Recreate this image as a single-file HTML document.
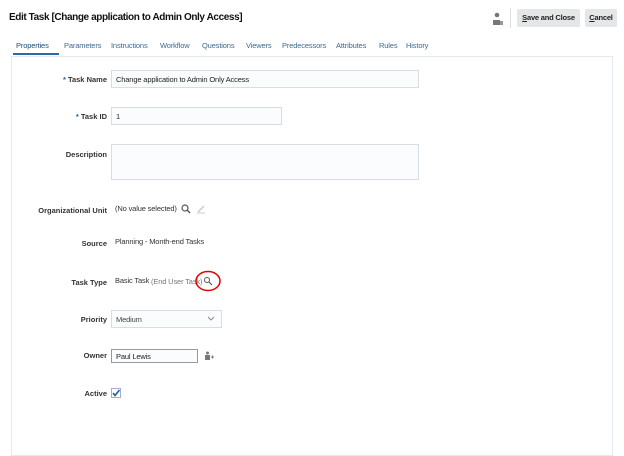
<!DOCTYPE html>
<html><head><style>
body{margin:0;width:624px;height:439px;background:#fff;font-family:"Liberation Sans",sans-serif;position:relative;overflow:hidden;color:#333}
.a{position:absolute;white-space:nowrap}
.t{font-size:7.5px;letter-spacing:-0.15px}
.lbl{position:absolute;right:517px;font-size:7.5px;font-weight:bold;color:#333;text-align:right;white-space:nowrap}
.inp{position:absolute;border:1px solid #d6dde4;background:#fafcfd;box-sizing:border-box;font-size:7.5px;letter-spacing:-0.15px;padding:4px 4px;color:#222;white-space:nowrap}
.tab{position:absolute;top:41px;font-size:7.5px;letter-spacing:-0.15px;color:#3d6a94}
.btn{position:absolute;top:9px;height:18px;background:#e4e6e8;border-radius:2px;font-size:7.5px;letter-spacing:-0.2px;font-weight:bold;color:#222;line-height:18px;text-align:center}
</style></head><body>
<div class="a" style="left:9px;top:12px;font-size:10px;letter-spacing:-0.4px;font-weight:bold;color:#111">Edit Task [Change application to Admin Only Access]</div>
<svg class="a" style="left:492px;top:12px" width="12" height="14" viewBox="0 0 12 14"><circle cx="5" cy="3" r="2.3" fill="#777"/><path d="M1 8h7v5H1z" fill="#777"/><rect x="8" y="9" width="3" height="4" fill="#999"/></svg>
<div class="a" style="left:510px;top:8px;width:1px;height:20px;background:#ddd"></div>
<div class="btn" style="left:517px;width:63px"><u>S</u>ave and Close</div>
<div class="btn" style="left:585px;width:32px"><u>C</u>ancel</div>
<div class="tab" style="left:16px;color:#1a4e7e">Properties</div>
<div class="a" style="left:13px;top:53px;width:46px;height:2px;background:#2b6aa6"></div>
<div class="tab" style="left:64px">Parameters</div>
<div class="tab" style="left:111px">Instructions</div>
<div class="tab" style="left:160px">Workflow</div>
<div class="tab" style="left:202px">Questions</div>
<div class="tab" style="left:246px">Viewers</div>
<div class="tab" style="left:282px">Predecessors</div>
<div class="tab" style="left:336px">Attributes</div>
<div class="tab" style="left:379px">Rules</div>
<div class="tab" style="left:406px">History</div>
<div class="a" style="left:11px;top:56px;width:602px;height:400px;border:1px solid #e3e9ef;box-sizing:border-box"></div>
<div class="lbl" style="top:75px"><span style="color:#1a5fa8">*</span> Task Name</div>
<div class="inp" style="left:111px;top:70px;width:308px;height:18px">Change application to Admin Only Access</div>
<div class="lbl" style="top:112px"><span style="color:#1a5fa8">*</span> Task ID</div>
<div class="inp" style="left:111px;top:107px;width:171px;height:18px">1</div>
<div class="lbl" style="top:150px">Description</div>
<div class="inp" style="left:111px;top:144px;width:308px;height:36px"></div>
<div class="lbl" style="top:206px">Organizational Unit</div>
<div class="a t" style="left:115px;top:204px">(No value selected)</div>
<svg class="a" style="left:181px;top:204px" width="10" height="10"><circle cx="4" cy="4" r="3" fill="none" stroke="#555" stroke-width="1.2"/><path d="M6 6l3 3" stroke="#555" stroke-width="1.4"/></svg>
<svg class="a" style="left:196px;top:204px" width="10" height="10"><path d="M2 8L8 2" stroke="#ccc" stroke-width="1.5"/><path d="M1 9h8" stroke="#ccc"/></svg>
<div class="lbl" style="top:239px">Source</div>
<div class="a t" style="left:115px;top:237px">Planning - Month-end Tasks</div>
<div class="lbl" style="top:278px">Task Type</div>
<div class="a t" style="left:115px;top:276px">Basic Task</div>
<div class="a t" style="left:151px;top:277px;color:#777">(End User Task)</div>
<svg class="a" style="left:194px;top:269px" width="30" height="24"><ellipse cx="14" cy="12" rx="12" ry="9.5" fill="none" stroke="#d00" stroke-width="1.5"/><circle cx="13" cy="11" r="2.5" fill="none" stroke="#555"/><path d="M15 13l3 3" stroke="#555" stroke-width="1.2"/></svg>
<div class="lbl" style="top:315px">Priority</div>
<div class="inp" style="left:111px;top:310px;width:111px;height:18px;color:#444">Medium</div>
<svg class="a" style="left:207px;top:316px" width="8" height="6"><path d="M1 1l3 3 3-3" fill="none" stroke="#888"/></svg>
<div class="lbl" style="top:351px">Owner</div>
<div class="inp" style="left:111px;top:349px;width:87px;height:14px;padding:2px 4px;border-color:#999">Paul Lewis</div>
<svg class="a" style="left:204px;top:351px" width="11" height="10"><circle cx="3.5" cy="2" r="1.5" fill="#777"/><rect x="1" y="4" width="5" height="5" fill="#777"/><path d="M7 6h3M8.5 4.5v3" stroke="#777"/></svg>
<div class="lbl" style="top:389px">Active</div>
<div class="a" style="left:111px;top:388px;width:10px;height:10px;border:1px solid #aac;box-sizing:border-box;background:#fff"></div>
<svg class="a" style="left:111px;top:388px" width="10" height="10"><path d="M2 5l2 2.5L8.5 2" fill="none" stroke="#1a5fa8" stroke-width="1.6"/></svg>
</body></html>
